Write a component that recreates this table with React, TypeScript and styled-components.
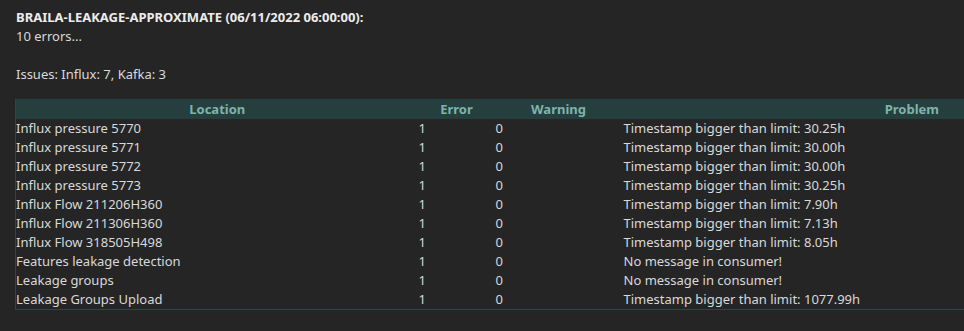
import React from 'react';
import styled, { createGlobalStyle } from 'styled-components';

interface Row {
    location: string;
    error: number;
    warning: number;
    problem: string;
}

const rows: Row[] = [
    { location: 'Influx pressure 5770', error: 1, warning: 0, problem: 'Timestamp bigger than limit: 30.25h' },
    { location: 'Influx pressure 5771', error: 1, warning: 0, problem: 'Timestamp bigger than limit: 30.00h' },
    { location: 'Influx pressure 5772', error: 1, warning: 0, problem: 'Timestamp bigger than limit: 30.00h' },
    { location: 'Influx pressure 5773', error: 1, warning: 0, problem: 'Timestamp bigger than limit: 30.25h' },
    { location: 'Influx Flow 211206H360', error: 1, warning: 0, problem: 'Timestamp bigger than limit: 7.90h' },
    { location: 'Influx Flow 211306H360', error: 1, warning: 0, problem: 'Timestamp bigger than limit: 7.13h' },
    { location: 'Influx Flow 318505H498', error: 1, warning: 0, problem: 'Timestamp bigger than limit: 8.05h' },
    { location: 'Features leakage detection', error: 1, warning: 0, problem: 'No message in consumer!' },
    { location: 'Leakage groups', error: 1, warning: 0, problem: 'No message in consumer!' },
    { location: 'Leakage Groups Upload', error: 1, warning: 0, problem: 'Timestamp bigger than limit: 1077.99h' },
];

const GlobalStyle = createGlobalStyle`
    html, body {
        margin: 0;
        background: #252526;
    }
    body {
        color: #d9d9d9;
        font-family: "Noto Sans", "Open Sans", sans-serif;
        font-size: 13px;
        line-height: 19px;
    }
`;

const App: React.FC = () => {
    return (
        <>
            <GlobalStyle />
            <StyledPage>
                <StyledTitle>BRAILA-LEAKAGE-APPROXIMATE (06/11/2022 06:00:00):</StyledTitle>
                <StyledLine>10 errors...</StyledLine>
                <StyledLine>&nbsp;</StyledLine>
                <StyledLine>Issues: Influx: 7, Kafka: 3</StyledLine>
                <StyledTable>
                    <colgroup>
                        <col style={{ width: 403 }} />
                        <col style={{ width: 76 }} />
                        <col style={{ width: 128 }} />
                        <col />
                    </colgroup>
                    <thead>
                        <tr>
                            <StyledTh>Location</StyledTh>
                            <StyledTh>Error</StyledTh>
                            <StyledTh>Warning</StyledTh>
                            <StyledTh $align='right'>Problem</StyledTh>
                        </tr>
                    </thead>
                    <tbody>
                        {rows.map((row) => (
                            <tr key={row.location}>
                                <StyledTd>{row.location}</StyledTd>
                                <StyledTd>{row.error}</StyledTd>
                                <StyledTd $pad={1}>{row.warning}</StyledTd>
                                <StyledTd $pad={1}>{row.problem}</StyledTd>
                            </tr>
                        ))}
                    </tbody>
                </StyledTable>
            </StyledPage>
        </>
    );
};

const StyledPage = styled.div`
    padding: 8px 0 0 15px;
`;

const StyledTitle = styled.div`
    font-weight: 700;
    color: #ececec;
    padding-left: 1px;
`;

const StyledLine = styled.div`
    padding-left: 1px;
`;

const StyledTable = styled.table`
    margin-top: 15px;
    width: 949px;
    border-collapse: collapse;
    table-layout: fixed;
    border-left: 1px solid #2b4745;
    border-bottom: 1px solid #2b4745;
`;

const StyledTh = styled.th<{ $align?: 'center' | 'right' }>`
    background: #253f3f;
    color: #7fb3ab;
    font-weight: 700;
    height: 20px;
    padding: 0 ${(p) => (p.$align === 'right' ? 25 : 0)}px 0 0;
    text-align: ${(p) => p.$align || 'center'};
`;

const StyledTd = styled.td<{ $pad?: number }>`
    padding: 0 0 0 ${(p) => p.$pad || 0}px;
    height: 19px;
    white-space: nowrap;
`;

export default App;
